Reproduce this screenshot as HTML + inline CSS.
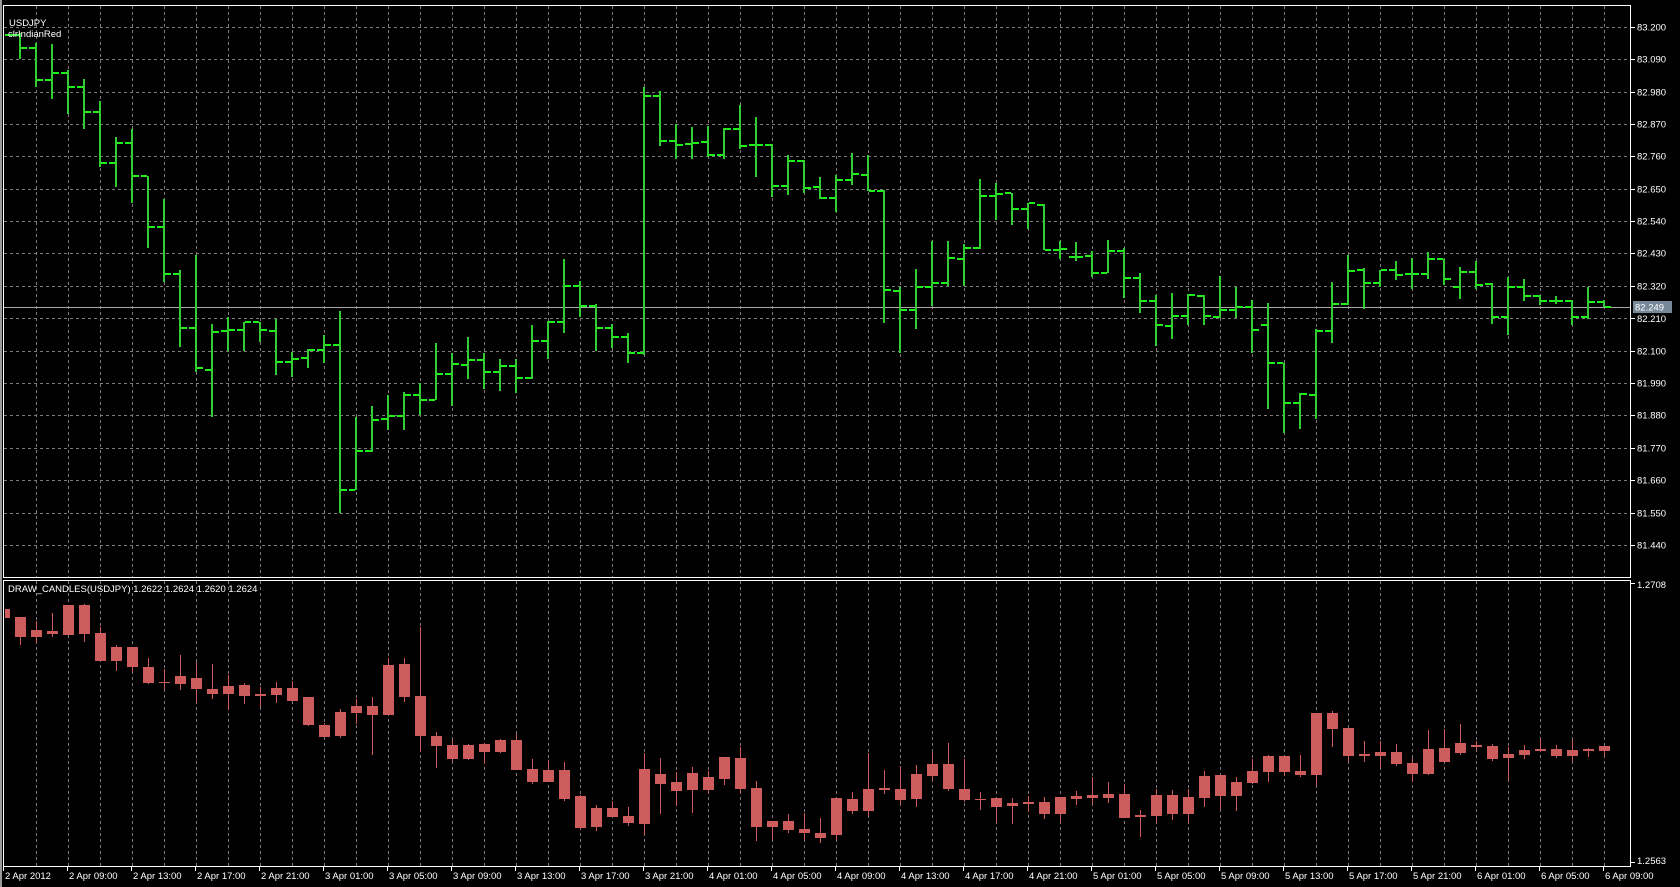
<!DOCTYPE html>
<html><head><meta charset="utf-8">
<style>
html,body{margin:0;padding:0;background:#000;width:1680px;height:887px;overflow:hidden}
svg{display:block}
text{font-family:"Liberation Sans",sans-serif;font-size:9.5px;fill:#fff}
</style></head><body>
<svg id="s" width="1680" height="887" xmlns="http://www.w3.org/2000/svg" shape-rendering="crispEdges">
<rect x="0" y="0" width="1680" height="887" fill="#000"/>
<rect x="0" y="0" width="2" height="887" fill="#9a9a9a"/>
<g id="grid" stroke="#7c7c7c" stroke-width="1" stroke-dasharray="3,3"></g>
<line x1="3" y1="307.5" x2="1630" y2="307.5" stroke="#a8a8a8" stroke-width="1"/>
<g id="bars"></g>
<g id="cand" fill="#cd5c5c"></g>
<g fill="none" stroke="#fff" stroke-width="1">
<rect x="3.5" y="5.5" width="1627" height="572"/>
<rect x="3.5" y="580.5" width="1627" height="286"/>
</g>
<g id="axis"></g>
<text x="9" y="26">USDJPY</text>
<text x="8" y="37">clrIndianRed</text>
<text x="8" y="592">DRAW_CANDLES(USDJPY) 1.2622 1.2624 1.2620 1.2624</text>
<rect x="1633" y="301" width="39" height="12" fill="#778899"/>
<text x="1635" y="310.5" style="fill:#fff">82.249</text>
</svg>
<script>
var NS="http://www.w3.org/2000/svg";
function el(p,t,a,txt){var e=document.createElementNS(NS,t);for(var k in a)e.setAttribute(k,a[k]);if(txt)e.textContent=txt;document.getElementById(p).appendChild(e);return e;}
// grid
for(var k=0;k<=16;k++){var y=Math.round(26.7+32.4*k)+0.5;el("grid","line",{x1:4,y1:y,x2:1630,y2:y});}
for(var k=1;k<=50;k++){var x=4+32*k+0.5;el("grid","line",{x1:x,y1:6,x2:x,y2:577});el("grid","line",{x1:x,y1:581,x2:x,y2:866});}
// price axis
var pl=["83.200","83.090","82.980","82.870","82.760","82.650","82.540","82.430","82.320","82.210","82.100","81.990","81.880","81.770","81.660","81.550","81.440"];
for(var k=0;k<=16;k++){var y=Math.round(26.7+32.4*k);el("axis","rect",{x:1631,y:y,width:4,height:1,fill:"#fff"});if(k!=9)el("axis","text",{x:1637,y:y+3.5},pl[k]);else el("axis","text",{x:1637,y:y+4},pl[k]);}
el("axis","rect",{x:1631,y:583,width:4,height:1,fill:"#fff"});el("axis","text",{x:1637,y:588},"1.2708");
el("axis","rect",{x:1631,y:862,width:4,height:1,fill:"#fff"});el("axis","text",{x:1637,y:864},"1.2563");
var tl=["2 Apr 2012","2 Apr 09:00","2 Apr 13:00","2 Apr 17:00","2 Apr 21:00","3 Apr 01:00","3 Apr 05:00","3 Apr 09:00","3 Apr 13:00","3 Apr 17:00","3 Apr 21:00","4 Apr 01:00","4 Apr 05:00","4 Apr 09:00","4 Apr 13:00","4 Apr 17:00","4 Apr 21:00","5 Apr 01:00","5 Apr 05:00","5 Apr 09:00","5 Apr 13:00","5 Apr 17:00","5 Apr 21:00","6 Apr 01:00","6 Apr 05:00","6 Apr 09:00"];
for(var k=0;k<tl.length;k++){var x=3+64*k;el("axis","rect",{x:x,y:867,width:1,height:4,fill:"#fff"});el("axis","text",{x:x+2,y:879},tl[k]);}
// bars [H,L,O,C] img coords; y=20+v/3
var M=[[40,118,45,83],[68,200,83,180],[72,236,180,158],[150,282,158,200],[178,326,200,276],[244,442,276,428],[352,500,428,368],[328,548,368,468],[468,684,468,620],[538,786,620,762],[750,980,762,924],[706,1055,924,1044],[912,1192,1050,936],[890,992,932,930],[905,992,930,906],[905,966,906,930],[896,1064,932,1026],[996,1072,1026,1016],[988,1044,1014,990],[944,1030,990,974],[874,1480,974,1410],[1192,1410,1410,1292],[1158,1296,1292,1200],[1124,1230,1196,1188],[1116,1230,1188,1124],
[1090,1186,1124,1140],[970,1140,1140,1062],[1000,1158,1062,1032],[952,1076,1034,1020],[1000,1108,1020,1056],[1018,1112,1056,1038],[1018,1118,1038,1074],[916,1078,1074,962],[902,1018,962,906],[718,938,906,798],[784,892,798,858],[852,992,858,924],[912,984,924,950],[938,1030,950,1000],[202,1006,1000,228],[214,378,228,362],[312,416,362,375],[322,416,372,370],[318,412,366,404],[324,416,404,328],[254,388,328,378],[292,472,376,376],[372,532,374,498],[406,524,498,422],[420,520,422,504],[472,538,500,534],
[466,576,534,480],[400,494,480,462],[406,514,464,512],[510,908,512,810],[800,1000,812,870],[748,926,870,800],[664,858,800,790],[664,798,790,714],[672,798,716,684],[478,688,684,527],[490,600,527,522],[518,616,520,566],[548,626,566,550],[552,690,554,690],[664,718,690,688],[666,724,712,712],[692,772,708,760],[660,760,760,694],[684,834,694,774],[760,878,774,844],[826,978,844,916],[820,956,918,888],[822,916,888,824],[826,916,828,888],[768,894,890,870],[800,894,870,860],
[840,1000,860,930],[850,1168,916,1030],[1030,1238,1030,1150],[1120,1228,1150,1122],[926,1196,1124,932],[786,970,932,852],[706,854,852,752],[744,868,750,788],[750,802,788,750],[724,780,750,764],[714,808,762,762],[696,778,762,718],[716,794,718,776],[740,838,800,756],[724,808,756,794],[790,912,792,892],[772,944,892,802],[778,844,800,828],[826,856,828,842],[828,852,842,844],[840,914,844,890],[800,898,890,846],[840,860,846,860]];
function my(v){return Math.round(20+v/3);}
el("bars","rect",{x:5,y:34,width:13,height:2,fill:"#22ee22"});
for(var i=0;i<M.length;i++){var b=M[i],x=20+16*i;var h=my(b[0]),l=my(b[1]);
el("bars","rect",{x:x-1,y:h,width:2,height:Math.max(2,l-h),fill:"#34cc34"});
el("bars","rect",{x:x-7,y:my(b[2])-1,width:6,height:2,fill:"#1ef01e"});
el("bars","rect",{x:x+1,y:my(b[3])-1,width:6,height:2,fill:"#1ef01e"});}
// candles [wickTop,wickBot,bodyTop,bodyBot]; y=580+v/3
var C=[[112,194,112,170],[124,190,150,170],[98,170,153,162],[75,165,75,165],[72,185,75,161],[142,243,159,243],[195,272,201,243],[201,275,201,260],[234,312,261,308],[268,330,305,308],[226,330,288,312],[246,365,294,327],[251,356,327,342],[286,386,318,342],[310,372,315,347],[321,382,342,348],[307,368,324,345],[304,363,324,362],[351,437,351,434],[428,471,435,470],[387,473,396,467],[358,432,378,398],[350,524,378,405],[235,405,255,405],[234,365,252,351],
[142,516,348,467],[456,564,468,497],[480,545,495,537],[492,540,495,537],[490,552,492,516],[477,518,480,516],[462,570,480,570],[537,612,567,606],[540,606,570,606],[546,663,570,657],[645,747,648,744],[675,753,684,741],[663,711,684,711],[681,738,708,729],[519,765,567,732],[534,702,582,612],[576,675,606,633],[561,699,579,630],[573,640,591,630],[531,615,531,597],[501,639,534,627],[603,783,624,741],[723,780,723,741],[702,759,723,750],[699,780,747,759],[714,789,759,774],
[654,780,654,765],[636,702,657,693],[519,708,627,693],[570,642,624,630],[557,672,627,660],[555,681,582,657],[516,600,552,588],[489,633,552,627],[537,666,627,660],[636,690,657,660],[654,726,654,681],[654,732,669,678],[648,696,666,672],[651,717,666,702],[651,726,651,702],[633,675,648,657],[591,672,645,654],[606,669,642,654],[612,714,642,714],[690,771,705,711],[627,726,645,708],[630,720,645,702],[627,726,651,702],[573,681,588,654],[585,690,585,648],[591,693,606,648],
[537,612,573,609],[525,606,528,576],[528,588,528,576],[525,591,573,585],[399,618,399,585],[393,501,399,447],[444,546,444,528],[483,546,522,528],[483,564,516,528],[492,558,516,552],[534,603,549,582],[450,585,507,582],[447,546,504,546],[432,525,489,519],[483,510,495,500],[492,543,498,537],[501,600,522,534],[495,537,510,525],[477,516,507,513],[495,534,507,528],[480,546,510,528],[504,531,507,513],[498,528,498,513]];
function cy(v){return Math.round(580+v/3);}
el("cand","rect",{x:5,y:609,width:5,height:9});
for(var i=0;i<C.length;i++){var c=C[i],x=20+16*i;var wt=cy(c[0]),wb=cy(c[1]),bt=cy(c[2]),bb=cy(c[3]);
el("cand","rect",{x:x,y:wt,width:1,height:Math.max(1,wb-wt)});
el("cand","rect",{x:x-5,y:bt,width:11,height:Math.max(1,bb-bt)});}
</script>
</body></html>
